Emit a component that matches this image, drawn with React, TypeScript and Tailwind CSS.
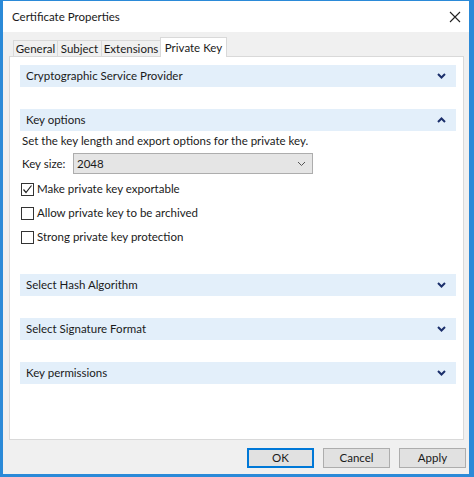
import React from "react";

const font = { fontFamily: 'Lato, "Noto Sans", sans-serif' };

function Chevron({ up }: { up?: boolean }) {
  return (
    <svg width="9" height="6" viewBox="0 0 9 6" className="shrink-0">
      <path
        d={up ? "M1 5 L4.5 1.5 L8 5" : "M1 1 L4.5 4.5 L8 1"}
        fill="none"
        stroke="#1b2f6b"
        strokeWidth="2"
      />
    </svg>
  );
}

function SectionBar({ title, up }: { title: string; up?: boolean }) {
  return (
    <div className="flex h-[22px] items-center justify-between bg-[#e3effa] pl-[6px] pr-[10px]">
      <span className="text-[11.5px] text-[#1a1a1a]">{title}</span>
      <Chevron up={up} />
    </div>
  );
}

function CheckRow({ label, checked }: { label: string; checked?: boolean }) {
  return (
    <div className="flex h-[24px] items-center">
      <div className="ml-[1px] flex h-[13px] w-[13px] items-center justify-center border border-[#333] bg-white">
        {checked && (
          <svg width="11" height="11" viewBox="0 0 11 11">
            <path d="M1.5 5.5 L4 8.5 L9.5 1.5" fill="none" stroke="#222" strokeWidth="1.2" />
          </svg>
        )}
      </div>
      <span className="ml-[3px] text-[11.5px] text-[#1a1a1a]">{label}</span>
    </div>
  );
}

function Tab({ label, active, w }: { label: string; active?: boolean; w: string }) {
  if (active) {
    return (
      <div
        className={
          "relative z-10 -mb-px -ml-px flex h-[20px] items-center justify-center border border-b-0 border-[#d9d9d9] bg-white text-[11.5px] text-[#1a1a1a] " +
          w
        }
      >
        {label}
      </div>
    );
  }
  return (
    <div
      className={
        "-ml-px flex h-[16px] items-center justify-center border border-b-0 border-[#d9d9d9] bg-[#f0f0f0] text-[11.5px] text-[#1a1a1a] first:ml-0 " +
        w
      }
    >
      {label}
    </div>
  );
}

function Button({ label, primary }: { label: string; primary?: boolean }) {
  return (
    <div
      className={
        "flex h-[20px] w-[67px] items-center justify-center bg-[#e1e1e1] text-[11.5px] text-[#1a1a1a] " +
        (primary ? "border-2 border-[#0078d7]" : "border border-[#adadad]")
      }
    >
      {label}
    </div>
  );
}

export default function App() {
  return (
    <div
      style={font}
      className="flex h-[477px] w-[474px] flex-col border-b-[3px] border-l-[3px] border-r-[5px] border-t border-[#2b8ad8] bg-[#f0f0f0]"
    >
      {/* title bar */}
      <div className="flex h-[31px] shrink-0 items-center justify-between bg-white pl-[9px] pr-[8px]">
        <span className="text-[11.5px] text-[#1a1a1a]">Certificate Properties</span>
        <svg width="12" height="12" viewBox="0 0 12 12">
          <path d="M1 1 L11 11 M11 1 L1 11" stroke="#222" strokeWidth="1.1" />
        </svg>
      </div>

      {/* tabs */}
      <div className="flex h-[24px] items-end pl-[10px]">
        <Tab label="General" w="w-[45px]" />
        <Tab label="Subject" w="w-[45px]" />
        <Tab label="Extensions" w="w-[60px]" />
        <Tab label="Private Key" w="w-[67px]" active />
      </div>

      {/* panel */}
      <div className="ml-[6px] mr-[5px] flex h-[384px] flex-col border border-[#d9d9d9] bg-white pl-[10px] pr-[7px] pt-[8px]">
        <SectionBar title="Cryptographic Service Provider" />
        <div className="mt-[22px]">
          <SectionBar title="Key options" up />
        </div>
        <div className="mt-[1px] pl-[2px] text-[11.5px] leading-[18px] text-[#1a1a1a]">
          Set the key length and export options for the private key.
        </div>
        <div className="mt-[3px] flex items-center pl-[2px]">
          <span className="w-[51px] text-[11.5px] text-[#1a1a1a]">Key size:</span>
          <div className="flex h-[21px] w-[240px] items-center justify-between border border-[#adadad] bg-[#e5e5e5] pl-[3px] pr-[6px]">
            <span className="text-[11.5px] text-[#1a1a1a]">2048</span>
            <svg width="9" height="6" viewBox="0 0 9 6">
              <path d="M1 1 L4.5 4.5 L8 1" fill="none" stroke="#555" strokeWidth="1" />
            </svg>
          </div>
        </div>
        <div className="mt-[3px]">
          <CheckRow label="Make private key exportable" checked />
          <CheckRow label="Allow private key to be archived" />
          <CheckRow label="Strong private key protection" />
        </div>
        <div className="mt-[25px] flex flex-col gap-[22px]">
          <SectionBar title="Select Hash Algorithm" />
          <SectionBar title="Select Signature Format" />
          <SectionBar title="Key permissions" />
        </div>
      </div>

      {/* footer */}
      <div className="flex justify-end gap-[9px] pr-[3px] pt-[8px]">
        <Button label="OK" primary />
        <Button label="Cancel" />
        <Button label="Apply" />
      </div>
    </div>
  );
}
